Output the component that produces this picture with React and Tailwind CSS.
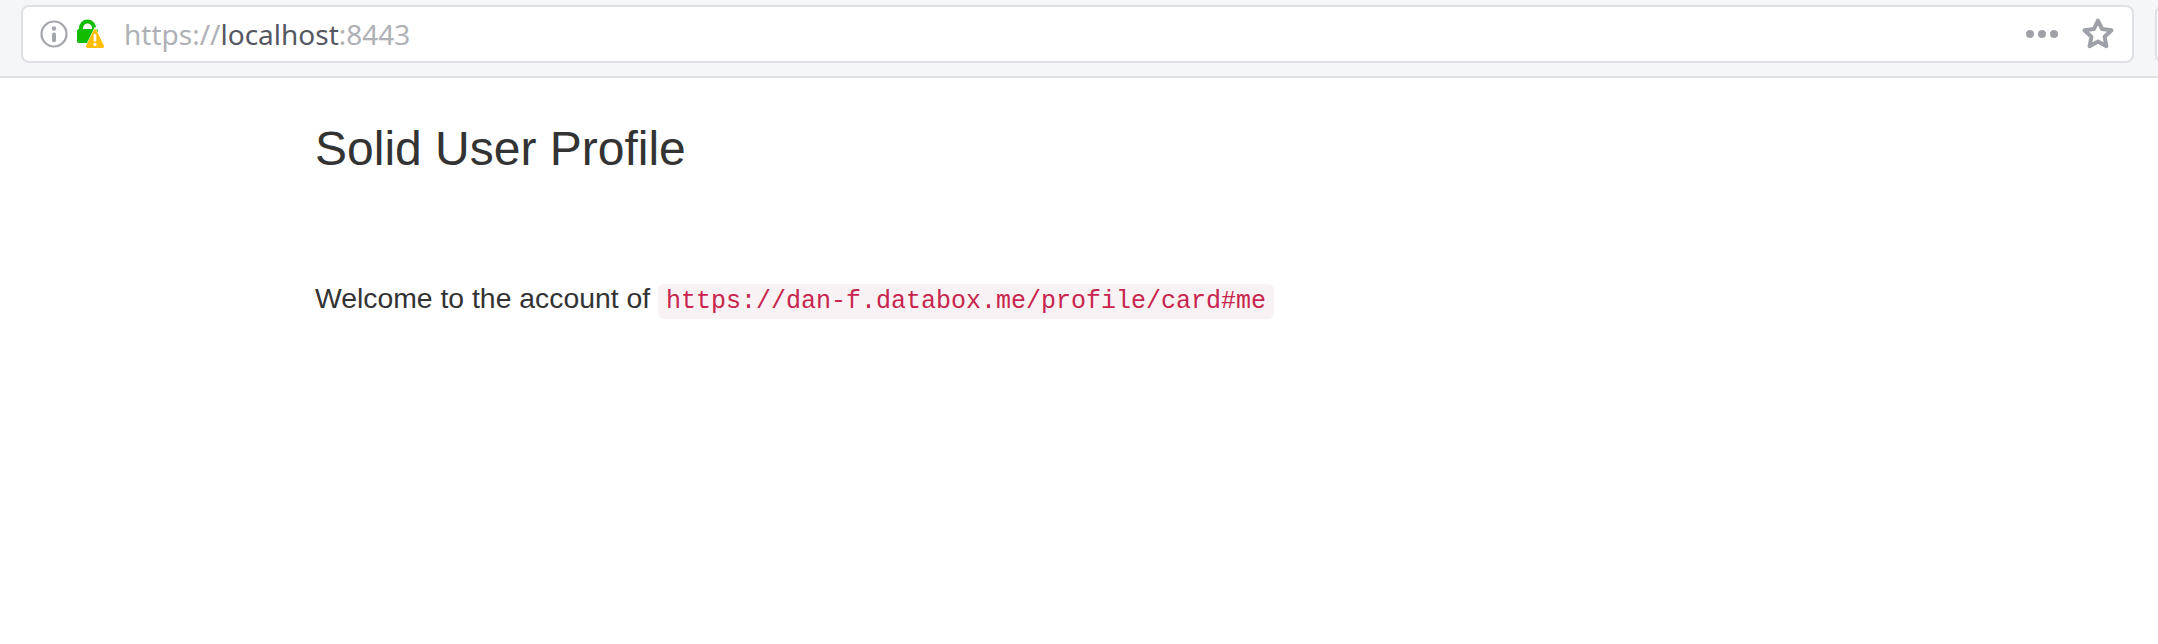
export default function App() {
  return (
    <div className="min-h-[644px] bg-white overflow-hidden">
      <div className="h-[78px] bg-[#f5f6f7] border-b-2 border-[#e0e1e5] flex items-start pt-[5px] pl-[21px] gap-[21px] overflow-hidden">
        <div className="w-[2113px] h-[58px] shrink-0 bg-white border-2 border-[#e0e1e5] rounded-[8px] flex items-center pl-[17px] pr-[17px]">
          <svg width="28" height="28" viewBox="0 0 28 28" className="shrink-0">
            <circle cx="14" cy="14" r="12.5" fill="none" stroke="#a4a6ad" strokeWidth="2.2" />
            <circle cx="14" cy="8.5" r="2.2" fill="#a4a6ad" />
            <rect x="12" y="12.5" width="4" height="9.5" rx="1.6" fill="#a4a6ad" />
          </svg>
          <svg width="30" height="30" viewBox="0 0 30 30" className="ml-[7px] shrink-0">
            <path d="M6 11V9a6.5 6.5 0 0 1 13 0v2" fill="none" stroke="#12bc00" strokeWidth="4" />
            <path d="M2 12a2 2 0 0 1 2-2h17a2 2 0 0 1 2 2v10a2 2 0 0 1-2 2H4a2 2 0 0 1-2-2Z" fill="#12bc00" />
            <path d="M20 7.5L31 30H9Z" fill="#ffffff" />
            <path d="M18.6 11.2a1.6 1.6 0 0 1 2.8 0l7.4 15.4a1.6 1.6 0 0 1-1.4 2.4H12.6a1.6 1.6 0 0 1-1.4-2.4Z" fill="#ffbf00" />
            <rect x="18.7" y="15" width="2.6" height="7.5" rx="1.2" fill="#ffffff" />
            <circle cx="20" cy="25.4" r="1.6" fill="#ffffff" />
          </svg>
          <div className="ml-[19px] text-[28px] leading-none text-[#afb1b6] whitespace-nowrap font-['Noto_Sans',sans-serif]">
            https://<span className="text-[#555862]">localhost</span>:8443
          </div>
          <div className="ml-auto flex items-center gap-[4px]">
            <span className="w-[8px] h-[8px] rounded-full bg-[#9fa1a9]" />
            <span className="w-[8px] h-[8px] rounded-full bg-[#9fa1a9]" />
            <span className="w-[8px] h-[8px] rounded-full bg-[#9fa1a9]" />
          </div>
          <svg width="34" height="34" viewBox="0 0 34 34" className="ml-[23px] shrink-0">
            <path d="M17 3.5l4.1 8.6 9.4 1.2-6.9 6.5 1.8 9.4-8.4-4.7-8.4 4.7 1.8-9.4-6.9-6.5 9.4-1.2Z" fill="none" stroke="#9fa1a9" strokeWidth="4" strokeLinejoin="round" />
          </svg>
        </div>
        <div className="w-[40px] h-[58px] shrink-0 bg-white border-2 border-[#e0e1e5] rounded-[8px]" />
      </div>
      <div className="pl-[315px] font-['Liberation_Sans',Arial,sans-serif] text-[#333333]">
        <h1 className="text-[48px] leading-[53px] pt-[44px] font-normal">Solid User Profile</h1>
        <p className="mt-[103px] text-[28.35px] leading-[40px] whitespace-nowrap">
          Welcome to the account of{" "}
          <code className="font-['Liberation_Mono',monospace] text-[25px] text-[#c7254e] bg-[#f9f2f4] rounded-[6px] px-[8px] py-[3px]">https://dan-f.databox.me/profile/card#me</code>
        </p>
      </div>
    </div>
  );
}
